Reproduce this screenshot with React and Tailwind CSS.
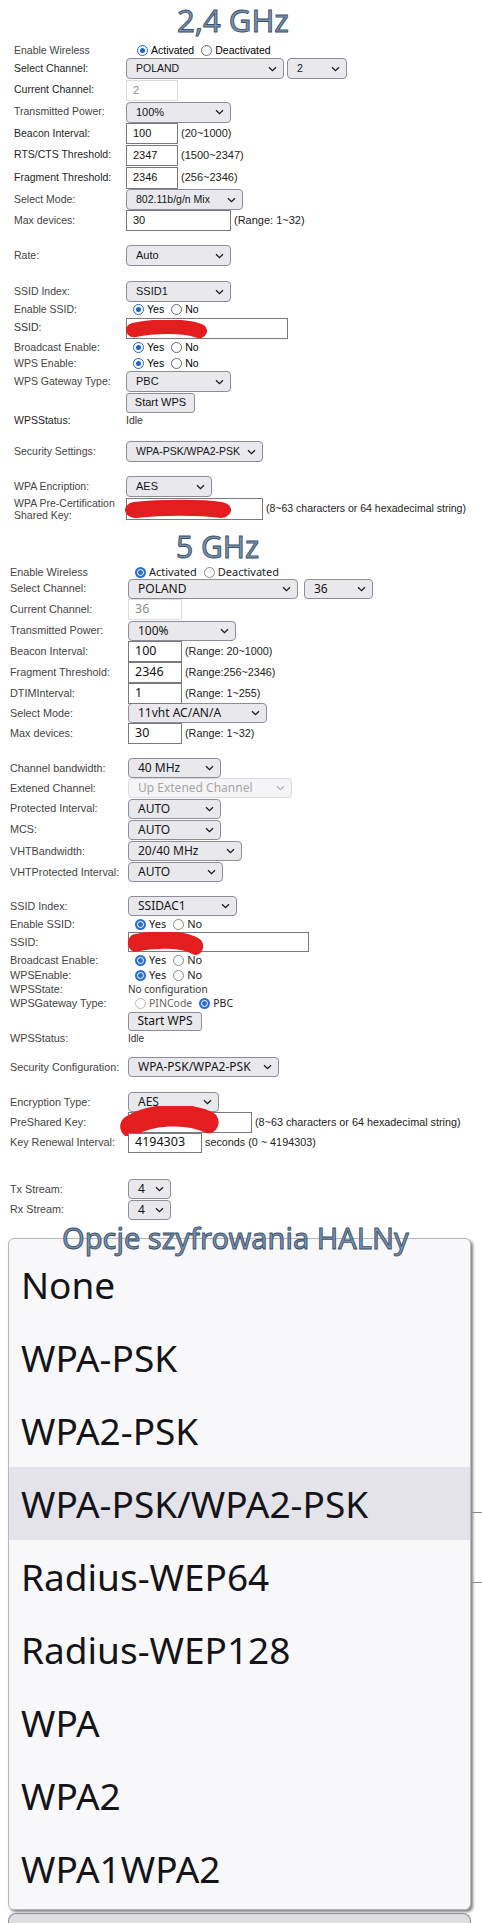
import React from 'react';

const arial = "[font-family:'Liberation_Sans',Arial,sans-serif]";
const noto = "[font-family:'Noto_Sans',sans-serif]";
const title = "[font-family:'Noto_Sans',sans-serif] leading-none text-[#7a93b1] [-webkit-text-stroke:0.9px_#3b5068]";

function Chevron({ color = '#1b1b1b' }) {
  return (
    <svg width="9" height="6" viewBox="0 0 9 6" className="shrink-0">
      <path d="M1 1.2l3.5 3.4L8 1.2" fill="none" stroke={color} strokeWidth="1.3" />
    </svg>
  );
}

function Select({ value, className = '', disabled = false }) {
  return (
    <div
      className={`flex items-center justify-between rounded-[4px] border pl-[9px] pr-[6px] ${
        disabled ? 'border-[#dadadf] bg-[#f5f5f7] text-[#a5a5a5]' : 'border-[#8d8d99] bg-[#e9e9ed] text-[#151515]'
      } ${className}`}
    >
      <span className="whitespace-nowrap">{value}</span>
      <Chevron color={disabled ? '#b3b3b3' : '#1b1b1b'} />
    </div>
  );
}

function Input({ value, className = '', disabled = false, children }) {
  return (
    <div
      className={`relative flex items-center border bg-white pl-[6px] ${
        disabled ? 'border-[#dedede] text-[#8c8c8c]' : 'border-[#7a7a7a] text-[#111]'
      } ${className}`}
    >
      {value}
      {children}
    </div>
  );
}

function Button({ label, className = '' }) {
  return (
    <div className={`flex items-center justify-center rounded-[3px] border border-[#8d8d99] bg-[#e9e9ed] text-[#111] ${className}`}>
      {label}
    </div>
  );
}

// thick red marker stroke hiding the ssid / key
function Blob({ className = '', d = 'M9 10 C 30 7, 60 6, 74 11' }) {
  return (
    <svg viewBox="0 0 84 22" preserveAspectRatio="none" className={`absolute ${className}`}>
      <path d={d} fill="none" stroke="#e41d1f" strokeWidth="16" strokeLinecap="round" />
    </svg>
  );
}

function RadioA({ checked, label }) {
  return (
    <span className="flex items-center gap-[3px]">
      {checked ? (
        <span className="flex size-[11px] items-center justify-center rounded-full border-[1.5px] border-solid border-[#1f63c4]">
          <span className="size-[5px] rounded-full bg-[#1f63c4]" />
        </span>
      ) : (
        <span className="size-[11px] rounded-full border-[1px] border-solid border-[#6a6a6a] bg-white" />
      )}
      {label}
    </span>
  );
}

function RadioB({ checked, label, faint = false }) {
  return (
    <span className={`flex items-center gap-[3px] ${faint ? 'text-[#666]' : ''}`}>
      {checked ? (
        <span className="flex size-[11px] items-center justify-center rounded-full bg-[#2b6fd1]">
          <span className="size-[7px] rounded-full border-[1.5px] border-solid border-white bg-[#2b6fd1]" />
        </span>
      ) : (
        <span className={`size-[11px] rounded-full border-[1px] border-solid bg-white ${faint ? 'border-[#b9b9b9]' : 'border-[#8a8a8a]'}`} />
      )}
      {label}
    </span>
  );
}

function Row({ h, label, lw, lc = 'text-[#444]', gap = 'gap-[3px]', children, className = '' }) {
  return (
    <div className={`flex items-center ${h} ${className}`}>
      <div className={`shrink-0 ${lw} ${lc}`}>{label}</div>
      <div className={`flex items-center ${gap}`}>{children}</div>
    </div>
  );
}

function Band24() {
  const lw = 'w-[112px]';
  const dark = 'text-[#1e1e1e]';
  return (
    <div className={`pl-[14px] text-[10.5px] ${arial}`}>
      <div className={`h-[43px] pl-[163px] pt-[5px] text-[31px] ${title}`}>2,4 GHz</div>
      <Row h="h-[15px]" lw={lw} label="Enable Wireless" gap="gap-[7px]">
        <span className="w-[4px]" />
        <RadioA checked label="Activated" />
        <RadioA label="Deactivated" />
      </Row>
      <Row h="h-[21px]" lw={lw} lc={dark} label="Select Channel:">
        <Select value="POLAND" className="h-[21px] w-[158px]" />
        <Select value="2" className="h-[21px] w-[60px]" />
      </Row>
      <Row h="h-[22px]" lw={lw} lc={dark} label="Current Channel:">
        <Input disabled value="2" className="h-[21px] w-[52px] text-[11px]" />
      </Row>
      <Row h="h-[22px]" lw={lw} label="Transmitted Power:">
        <Select value="100%" className="h-[21px] w-[105px] text-[11px]" />
      </Row>
      <Row h="h-[21px]" lw={lw} lc={dark} label="Beacon Interval:">
        <Input value="100" className="h-[21px] w-[52px] text-[11px]" />
        <span className="text-[11px] text-[#222]">(20~1000)</span>
      </Row>
      <Row h="h-[22px]" lw={lw} lc={dark} label="RTS/CTS Threshold:">
        <Input value="2347" className="h-[21px] w-[52px] text-[11px]" />
        <span className="text-[11px] text-[#222]">(1500~2347)</span>
      </Row>
      <Row h="h-[23px]" lw={lw} lc={dark} label="Fragment Threshold:">
        <Input value="2346" className="h-[22px] w-[52px] text-[11px]" />
        <span className="text-[11px] text-[#222]">(256~2346)</span>
      </Row>
      <Row h="h-[21px]" lw={lw} label="Select Mode:">
        <Select value="802.11b/g/n Mix" className="h-[21px] w-[117px] text-[10.5px]" />
      </Row>
      <Row h="h-[21px]" lw={lw} label="Max devices:">
        <Input value="30" className="h-[21px] w-[105px] text-[11px]" />
        <span className="text-[11px] text-[#222]">(Range: 1~32)</span>
      </Row>
      <Row h="h-[21px]" className="mt-[14px]" lw={lw} label="Rate:">
        <Select value="Auto" className="h-[21px] w-[105px] text-[11px]" />
      </Row>
      <Row h="h-[21px]" className="mt-[15px]" lw={lw} label="SSID Index:">
        <Select value="SSID1" className="h-[21px] w-[105px] text-[11px]" />
      </Row>
      <Row h="h-[15px]" lw={lw} label="Enable SSID:" gap="gap-[7px]">
        <span className="w-[0px]" />
        <RadioA checked label="Yes" />
        <RadioA label="No" />
      </Row>
      <Row h="h-[22px]" lw={lw} lc="text-[#333]" label="SSID:">
        <Input className="h-[21px] w-[162px]">
          <Blob className="left-[-2px] top-[1px] h-[20px] w-[84px]" d="M9 11 C 30 6, 60 6, 74 12" />
        </Input>
      </Row>
      <Row h="h-[17px]" lw={lw} label="Broadcast Enable:" gap="gap-[7px]">
        <span className="w-[0px]" />
        <RadioA checked label="Yes" />
        <RadioA label="No" />
      </Row>
      <Row h="h-[15px]" lw={lw} label="WPS Enable:" gap="gap-[7px]">
        <span className="w-[0px]" />
        <RadioA checked label="Yes" />
        <RadioA label="No" />
      </Row>
      <Row h="h-[21px]" lw={lw} label="WPS Gateway Type:">
        <Select value="PBC" className="h-[21px] w-[105px] text-[11px]" />
      </Row>
      <Row h="h-[21px]" lw={lw} label="">
        <Button label="Start WPS" className="h-[20px] w-[69px] text-[11px]" />
      </Row>
      <Row h="h-[15px]" lw={lw} lc={dark} label="WPSStatus:">
        <span className="text-[#333]">Idle</span>
      </Row>
      <Row h="h-[21px]" className="mt-[13px]" lw={lw} label="Security Settings:">
        <Select value="WPA-PSK/WPA2-PSK" className="h-[21px] w-[137px] text-[10.5px]" />
      </Row>
      <Row h="h-[21px]" className="mt-[14px]" lw={lw} label="WPA Encription:">
        <Select value="AES" className="h-[21px] w-[86px] text-[11px]" />
      </Row>
      <Row
        h="h-[24px]"
        lw={lw}
        label={
          <span className="block leading-[12px]">
            WPA Pre-Certification
            <br />
            Shared Key:
          </span>
        }
      >
        <Input className="h-[22px] w-[137px]">
          <Blob className="left-[-2px] top-[0px] h-[22px] w-[106px]" d="M8 11 C 30 8, 60 8, 76 11" />
        </Input>
        <span className="text-[10.5px] text-[#222]">(8~63 characters or 64 hexadecimal string)</span>
      </Row>
    </div>
  );
}

function Band5() {
  const lw = 'w-[118px]';
  const sel = `${noto} text-[12px]`;
  const inp = `${noto} text-[12.5px]`;
  const hint = 'text-[10.8px] text-[#222]';
  return (
    <div className={`pl-[10px] text-[10.8px] text-[#222] ${arial}`}>
      <div className={`h-[44px] pl-[166px] pt-[11px] text-[30px] ${title}`}>5 GHz</div>
      <Row h="h-[14px]" lw={lw} label="Enable Wireless" gap="gap-[7px]">
        <span className="w-[0px]" />
        <RadioB checked label={<span className={`${noto} text-[11px]`}>Activated</span>} />
        <RadioB label={<span className={`${noto} text-[11px]`}>Deactivated</span>} />
      </Row>
      <Row h="h-[19px]" lw={lw} label="Select Channel:" gap="gap-[6px]">
        <Select value="POLAND" className={`h-[20px] w-[170px] ${sel}`} />
        <Select value="36" className={`h-[20px] w-[69px] ${sel}`} />
      </Row>
      <Row h="h-[22px]" lw={lw} label="Current Channel:">
        <Input disabled value="36" className={`h-[21px] w-[54px] ${inp}`} />
      </Row>
      <Row h="h-[21px]" lw={lw} label="Transmitted Power:">
        <Select value="100%" className={`h-[20px] w-[108px] ${sel}`} />
      </Row>
      <Row h="h-[21px]" lw={lw} label="Beacon Interval:">
        <Input value="100" className={`h-[21px] w-[54px] ${inp}`} />
        <span className={hint}>(Range: 20~1000)</span>
      </Row>
      <Row h="h-[21px]" lw={lw} label="Fragment Threshold:">
        <Input value="2346" className={`h-[21px] w-[54px] ${inp}`} />
        <span className={hint}>(Range:256~2346)</span>
      </Row>
      <Row h="h-[20px]" lw={lw} label="DTIMInterval:">
        <Input value="1" className={`h-[21px] w-[54px] ${inp}`} />
        <span className={hint}>(Range: 1~255)</span>
      </Row>
      <Row h="h-[20px]" lw={lw} label="Select Mode:">
        <Select value="11vht AC/AN/A" className={`h-[20px] w-[139px] ${sel}`} />
      </Row>
      <Row h="h-[21px]" lw={lw} label="Max devices:">
        <Input value="30" className={`h-[21px] w-[54px] ${inp}`} />
        <span className={hint}>(Range: 1~32)</span>
      </Row>
      <Row h="h-[20px]" className="mt-[14px]" lw={lw} label="Channel bandwidth:">
        <Select value="40 MHz" className={`h-[20px] w-[93px] ${sel}`} />
      </Row>
      <Row h="h-[20px]" lw={lw} label="Extened Channel:">
        <Select disabled value="Up Extened Channel" className={`h-[20px] w-[164px] ${sel}`} />
      </Row>
      <Row h="h-[21px]" lw={lw} label="Protected Interval:">
        <Select value="AUTO" className={`h-[20px] w-[93px] ${sel}`} />
      </Row>
      <Row h="h-[21px]" lw={lw} label="MCS:">
        <Select value="AUTO" className={`h-[20px] w-[93px] ${sel}`} />
      </Row>
      <Row h="h-[22px]" lw={lw} label="VHTBandwidth:">
        <Select value="20/40 MHz" className={`h-[20px] w-[114px] ${sel}`} />
      </Row>
      <Row h="h-[20px]" lw={lw} label="VHTProtected Interval:">
        <Select value="AUTO" className={`h-[20px] w-[95px] ${sel}`} />
      </Row>
      <Row h="h-[20px]" className="mt-[14px]" lw={lw} label="SSID Index:">
        <Select value="SSIDAC1" className={`h-[20px] w-[109px] ${sel}`} />
      </Row>
      <Row h="h-[16px]" lw={lw} label="Enable SSID:" gap="gap-[7px]">
        <span className="w-[0px]" />
        <RadioB checked label={<span className={`${noto} text-[11px]`}>Yes</span>} />
        <RadioB label={<span className={`${noto} text-[11px]`}>No</span>} />
      </Row>
      <Row h="h-[20px]" lw={lw} label="SSID:">
        <Input className="h-[20px] w-[181px]">
          <Blob className="left-[-2px] top-[-1px] h-[24px] w-[78px]" d="M9 10 C 30 6, 60 6, 74 13" />
        </Input>
      </Row>
      <Row h="h-[16px]" lw={lw} label="Broadcast Enable:" gap="gap-[7px]">
        <span className="w-[0px]" />
        <RadioB checked label={<span className={`${noto} text-[11px]`}>Yes</span>} />
        <RadioB label={<span className={`${noto} text-[11px]`}>No</span>} />
      </Row>
      <Row h="h-[15px]" lw={lw} label="WPSEnable:" gap="gap-[7px]">
        <span className="w-[0px]" />
        <RadioB checked label={<span className={`${noto} text-[11px]`}>Yes</span>} />
        <RadioB label={<span className={`${noto} text-[11px]`}>No</span>} />
      </Row>
      <Row h="h-[13px]" lw={lw} label="WPSState:">
        <span className={`${noto} text-[10px] text-[#333]`}>No configuration</span>
      </Row>
      <Row h="h-[15px]" lw={lw} label="WPSGateway Type:" gap="gap-[7px]">
        <span className="w-[0px]" />
        <RadioB faint label={<span className={`${noto} text-[10.5px]`}>PINCode</span>} />
        <RadioB checked label={<span className={`${noto} text-[10.5px]`}>PBC</span>} />
      </Row>
      <Row h="h-[20px]" lw={lw} label="">
        <Button label="Start WPS" className={`h-[19px] w-[74px] ${noto} text-[12px]`} />
      </Row>
      <Row h="h-[14px]" lw={lw} label="WPSStatus:">
        <span className="text-[10px] text-[#333]">Idle</span>
      </Row>
      <Row h="h-[20px]" className="mt-[12px]" lw={lw} label="Security Configuration:">
        <Select value="WPA-PSK/WPA2-PSK" className={`h-[20px] w-[151px] ${sel}`} />
      </Row>
      <Row h="h-[20px]" className="mt-[15px]" lw={lw} label="Encryption Type:">
        <Select value="AES" className={`h-[20px] w-[91px] ${sel}`} />
      </Row>
      <Row h="h-[21px]" lw={lw} label="PreShared Key:">
        <Input className="h-[21px] w-[124px]">
          <Blob className="left-[-10px] top-[-7px] h-[30px] w-[102px]" d="M9 15 C 25 6, 55 4, 74 12" />
        </Input>
        <span className={hint}>(8~63 characters or 64 hexadecimal string)</span>
      </Row>
      <Row h="h-[19px]" lw={lw} label="Key Renewal Interval:">
        <Input value="4194303" className={`h-[20px] w-[74px] ${inp}`} />
        <span className={hint}>seconds (0 ~ 4194303)</span>
      </Row>
      <Row h="h-[20px]" className="mt-[27px]" lw={lw} label="Tx Stream:">
        <Select value="4" className={`h-[20px] w-[43px] ${sel}`} />
      </Row>
      <Row h="h-[21px]" lw={lw} label="Rx Stream:">
        <Select value="4" className={`h-[20px] w-[43px] ${sel}`} />
      </Row>
    </div>
  );
}

const options = [
  'None',
  'WPA-PSK',
  'WPA2-PSK',
  'WPA-PSK/WPA2-PSK',
  'Radius-WEP64',
  'Radius-WEP128',
  'WPA',
  'WPA2',
  'WPA1WPA2',
];

function EncryptionList() {
  return (
    <div className="relative pt-[18px]">
      <div className={`absolute left-[62px] top-[3px] z-10 text-[29px] ${title}`}>Opcje szyfrowania HALNy</div>
      {/* bits of the page behind the dropdown */}
      <div className="absolute right-0 top-[292px] h-[1px] w-[10px] bg-[#8a8a8a]" />
      <div className="absolute right-0 top-[362px] h-[1px] w-[10px] bg-[#8a8a8a]" />
      <div className="mx-[8px] w-[463px] rounded-[6px] border border-[#b8b8be] bg-[#f8f8fb] pb-[4px] pt-[9px] shadow-[2px_2px_3px_rgba(0,0,0,0.5)]">
        {options.map((o) => (
          <div
            key={o}
            className={`flex h-[73px] items-center pl-[12px] text-[37px] text-[#141418] ${noto} ${
              o === 'WPA-PSK/WPA2-PSK' ? 'bg-[#e3e3e9]' : ''
            }`}
          >
            {o}
          </div>
        ))}
      </div>
      <div className="mx-[8px] mt-[3px] h-[10px] w-[463px] rounded-t-[8px] border border-b-0 border-[#8c8c92] bg-[#dedee3]" />
    </div>
  );
}

export default function App() {
  return (
    <div className="w-[482px] overflow-hidden bg-white">
      <Band24 />
      <Band5 />
      <EncryptionList />
    </div>
  );
}
